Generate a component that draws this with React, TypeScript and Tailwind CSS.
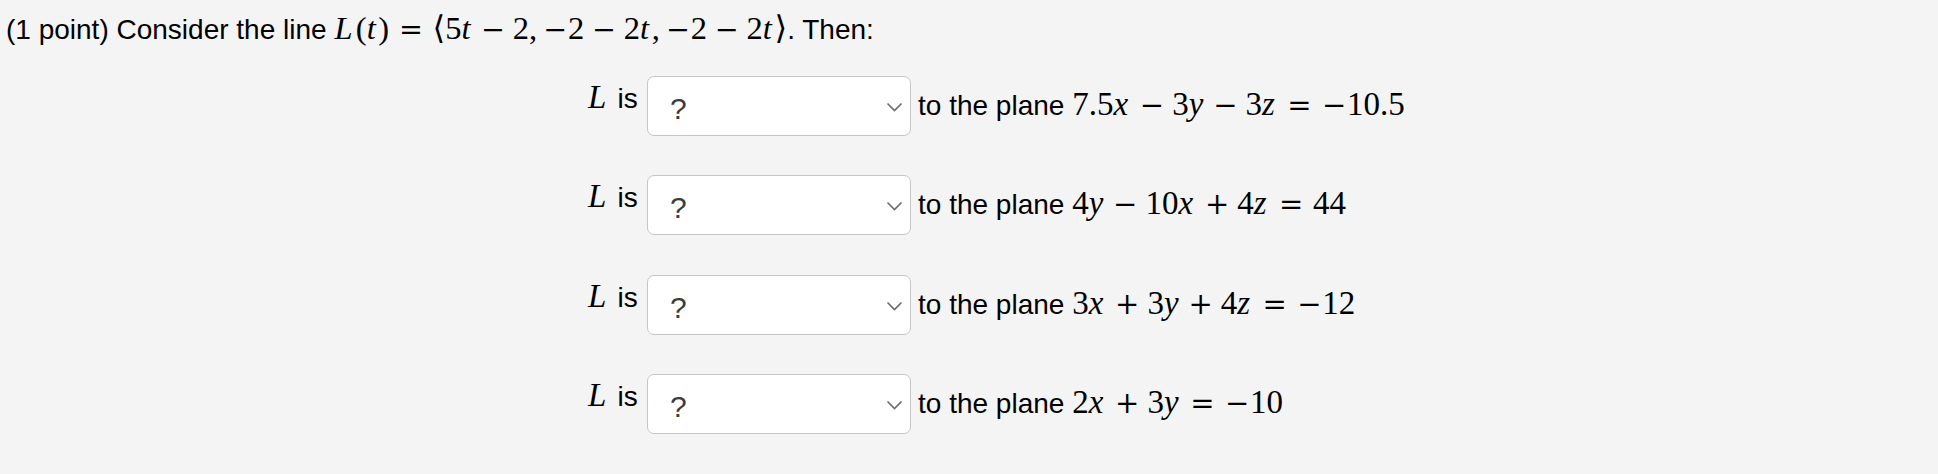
import React from "react";

const W: Record<string, string> = {
  L: "w-[0.66em]",
  t: "w-[0.36em]",
  x: "w-[0.56em]",
  y: "w-[0.5em]",
  z: "w-[0.465em]",
};

function V({ c }: { c: string }) {
  return <span className={`inline-block italic ${W[c]}`}>{c}</span>;
}
function Op({ c }: { c: string }) {
  return <span className="font-['DejaVu_Serif',serif] text-[0.88em]">{c}</span>;
}
function Bin({ c }: { c: string }) {
  return (
    <span className="inline-block w-[0.778em] mx-[0.222em] text-center">
      <Op c={c} />
    </span>
  );
}
function Rel({ c }: { c: string }) {
  return (
    <span className="inline-block w-[0.778em] mx-[0.278em] text-center">
      <Op c={c} />
    </span>
  );
}
function Neg() {
  return (
    <span className="inline-block w-[0.778em] text-center">
      <Op c="−" />
    </span>
  );
}
function M({ children, size = "row" }: { children: React.ReactNode; size?: "row" | "head" }) {
  return (
    <span
      className={
        size === "row"
          ? "font-['Liberation_Serif','DejaVu_Serif',serif] text-[33px] leading-[31px] whitespace-nowrap"
          : "font-['Liberation_Serif','DejaVu_Serif',serif] text-[32.5px] leading-[31px] whitespace-nowrap"
      }
    >
      {children}
    </span>
  );
}

function Chevron() {
  return (
    <svg width="17" height="10" viewBox="0 0 17 10" className="absolute right-[7px] top-[25px]">
      <polyline points="1.5,1.5 8.5,8.5 15.5,1.5" fill="none" stroke="#6b6b6b" strokeWidth="1.6" />
    </svg>
  );
}

function Select() {
  return (
    <div className="relative w-[264px] h-[60px] shrink-0 rounded-[7px] border-[1.5px] border-[#c6c6c6] bg-white flex items-center pl-[22px] pt-[5px]">
      <span className="text-[30px] leading-[31px] text-[#3b3b3b]">?</span>
      <Chevron />
    </div>
  );
}

function Row({ eq }: { eq: React.ReactNode }) {
  return (
    <div className="flex items-start">
      <div className="mt-[6px] w-[59px] whitespace-nowrap">
        <M>
          <V c="L" />
        </M>{" "}
        is
      </div>
      <Select />
      <div className="mt-[13px] ml-[7px] whitespace-nowrap">
        to the plane <M>{eq}</M>
      </div>
    </div>
  );
}

export default function App() {
  return (
    <div className="min-h-screen w-full bg-[#f4f4f4] text-black font-['Liberation_Sans',Arial,sans-serif] text-[28px] leading-[31px]">
      <div className="pl-[6px] pt-[13px] whitespace-nowrap">
        (1 point) Consider the line{" "}
        <M size="head">
          <V c="L" />(<V c="t" />)<Rel c="=" />⟨5<V c="t" />
          <Bin c="−" />2,<span className="inline-block w-[0.167em]" />
          <Neg />2<Bin c="−" />2<V c="t" />,<span className="inline-block w-[0.167em]" />
          <Neg />2<Bin c="−" />2<V c="t" />⟩
        </M>
        . Then:
      </div>
      <div className="ml-[588px] mt-[31px] flex flex-col gap-[39.3px]">
        <Row
          eq={
            <>
              7.5<V c="x" />
              <Bin c="−" />3<V c="y" />
              <Bin c="−" />3<V c="z" />
              <Rel c="=" />
              <Neg />10.5
            </>
          }
        />
        <Row
          eq={
            <>
              4<V c="y" />
              <Bin c="−" />10<V c="x" />
              <Bin c="+" />4<V c="z" />
              <Rel c="=" />44
            </>
          }
        />
        <Row
          eq={
            <>
              3<V c="x" />
              <Bin c="+" />3<V c="y" />
              <Bin c="+" />4<V c="z" />
              <Rel c="=" />
              <Neg />12
            </>
          }
        />
        <Row
          eq={
            <>
              2<V c="x" />
              <Bin c="+" />3<V c="y" />
              <Rel c="=" />
              <Neg />10
            </>
          }
        />
      </div>
    </div>
  );
}
